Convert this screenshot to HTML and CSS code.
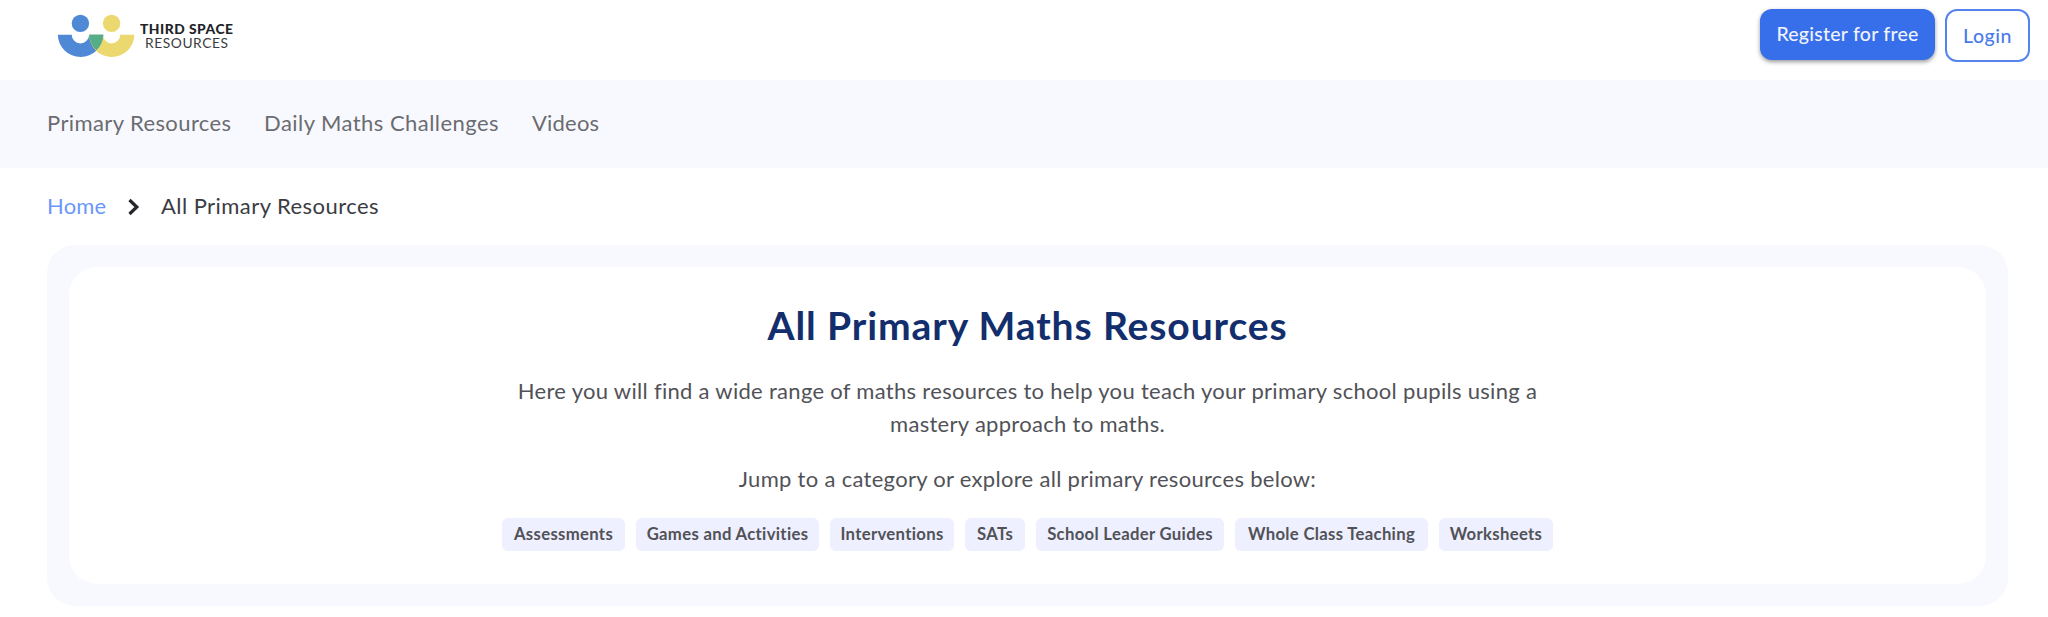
FILE: index.html
```html
<!DOCTYPE html>
<html lang="en">
<head>
<meta charset="utf-8">
<title>All Primary Maths Resources</title>
<link rel="stylesheet" href="styles.css">
</head>
<body>
<header class="header">
  <a class="logo" aria-label="Third Space Resources">
    <svg class="logo-art" width="180" height="48" viewBox="56 12 180 48">
      <circle cx="80.4" cy="23.4" r="8.7" fill="#4f89d5"/>
      <circle cx="111.6" cy="23.4" r="8.7" fill="#ebd86e"/>
      <path d="M57.9 34.7H71.7A8.7 8.7 0 0 0 89.1 34.7H103.3A22.7 22.2 0 0 1 57.9 34.7Z" fill="#4f89d5"/>
      <path d="M89.2 34.7H102.9A8.7 8.7 0 0 0 120.3 34.7H134.3A22.55 22.2 0 0 1 89.2 34.7Z" fill="#ebd86e"/>
      <path d="M89.2 34.7H103.3A22.7 22.2 0 0 1 96.4 50.3A22.55 22.2 0 0 1 89.2 34.7Z" fill="#56ae88"/>
      <text class="logo-name" x="140" y="34" textLength="93">THIRD SPACE</text>
      <text class="logo-sub" x="145" y="48.2" textLength="83">RESOURCES</text>
    </svg>
  </a>
  <div class="actions">
    <a class="button button-primary">Register for free</a>
    <a class="button button-outline">Login</a>
  </div>
</header>
<nav class="nav">
  <a class="nav-primary">Primary Resources</a>
  <a class="nav-daily">Daily Maths Challenges</a>
  <a class="nav-videos">Videos</a>
</nav>
<main>
  <div class="breadcrumb">
    <a class="crumb-home">Home</a>
    <svg class="chevron" width="12" height="18" viewBox="0 0 12 18"><path d="M1.5 2L8.8 9L1.5 16" fill="none" stroke="#26272b" stroke-width="3.2"/></svg>
    <span class="crumb-current">All Primary Resources</span>
  </div>
  <section class="panel">
    <div class="card">
      <h1 class="title">All Primary Maths Resources</h1>
      <p class="intro">Here you will find a wide range of maths resources to help you teach your primary school pupils using a<br>mastery approach to maths.</p>
      <p class="intro jump">Jump to a category or explore all primary resources below:</p>
      <div class="chips">
        <a class="chip chip-assessments">Assessments</a>
        <a class="chip chip-games">Games and Activities</a>
        <a class="chip chip-interventions">Interventions</a>
        <a class="chip chip-sats">SATs</a>
        <a class="chip chip-leader">School Leader Guides</a>
        <a class="chip chip-class">Whole Class Teaching</a>
        <a class="chip chip-worksheets">Worksheets</a>
      </div>
    </div>
  </section>
</main>
</body>
</html>
```
FILE: styles.css
```css
* { box-sizing: border-box; }
body {
  margin: 0;
  background: #fff;
  font-family: Lato, "Open Sans", sans-serif;
  font-size: 22px;
  color: #515257;
}
.header {
  height: 80px;
  display: flex;
  justify-content: space-between;
  align-items: flex-start;
  padding: 9px 18px 0 56px;
}
.logo { padding-top: 3px; }
.logo-art { display: block; }
.logo-name { font-size: 13.8px; font-weight: 900; fill: #222329; }
.logo-sub { font-size: 13.8px; fill: #3b3c42; }
.actions { display: flex; gap: 10px; }
.button {
  display: flex;
  align-items: center;
  justify-content: center;
  border-radius: 12px;
  font-size: 19.5px;
  font-weight: 500;
  white-space: nowrap;
}
.button-primary {
  width: 175px;
  height: 51px;
  padding-bottom: 2px;
  background: #376eea;
  color: #eef3ff;
  letter-spacing: 0.25px;
  box-shadow: 0 2px 4px rgba(0, 0, 0, 0.4);
}
.button-outline {
  width: 85px;
  height: 53px;
  border: 2px solid #5584ee;
  color: #4a7bec;
  letter-spacing: 0.5px;
}
.nav {
  height: 88px;
  background: #f8f9ff;
  display: flex;
  align-items: center;
  padding: 0 47px 3px;
  color: #6b6c70;
}
.nav-primary { width: 217px; letter-spacing: 0.4px; }
.nav-daily { width: 268px; letter-spacing: 0.45px; }
.nav-videos { letter-spacing: 0.2px; }
.breadcrumb {
  height: 77px;
  display: flex;
  align-items: center;
  padding: 0 47px 2px;
}
.crumb-home { width: 81px; color: #6b97fa; letter-spacing: 0.2px; }
.chevron { width: 12px; margin: 2px 21px 0 0; }
.crumb-current { color: #3b3c42; letter-spacing: 0.45px; }
.panel {
  margin: 0 40px 0 47px;
  padding: 22px;
  height: 361px;
  background: #f8f9ff;
  border-radius: 28px;
}
.card {
  height: 317px;
  padding-top: 30px;
  background: #fff;
  border-radius: 28px;
  text-align: center;
}
.title {
  margin: 0;
  font-size: 39px;
  line-height: 56px;
  font-weight: 700;
  letter-spacing: 0.9px;
  color: #132e6c;
}
.intro {
  margin: 21px 0 0;
  line-height: 33px;
  letter-spacing: 0.3px;
}
.jump { margin-top: 22px; }
.chips {
  display: flex;
  justify-content: center;
  gap: 11px;
  margin-top: 23px;
}
.chip {
  height: 33px;
  line-height: 33px;
  border-radius: 6px;
  background: #eeefff;
  font-size: 16.7px;
  font-weight: 700;
  letter-spacing: 0.32px;
  white-space: nowrap;
}
.chip-assessments { width: 123px; }
.chip-games { width: 183px; }
.chip-interventions { width: 124px; }
.chip-sats { width: 60px; }
.chip-leader { width: 188px; }
.chip-class { width: 193px; }
.chip-worksheets { width: 114px; }
```
